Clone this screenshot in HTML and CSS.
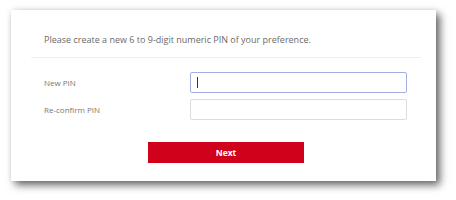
FILE: index.html
```html
<!DOCTYPE html>
<html>
<head>
<meta charset="utf-8">
<link rel="stylesheet" href="styles.css">
</head>
<body>
<div class="card">
  <p class="intro">Please create a new 6 to 9-digit numeric PIN of your preference.</p>
  <div class="divider"></div>
  <div class="form">
    <div class="row">
      <label class="label">New PIN</label>
      <div class="input focused"><span class="caret"></span></div>
    </div>
    <div class="row">
      <label class="label">Re-confirm PIN</label>
      <div class="input"></div>
    </div>
  </div>
  <button class="next">Next</button>
</div>
</body>
</html>
```
FILE: styles.css
```css
html, body {
  margin: 0;
  padding: 0;
  background: #fff;
}
body {
  width: 456px;
  height: 200px;
  overflow: hidden;
  font-family: "Open Sans", "Noto Sans", sans-serif;
}
.card {
  margin: 10px 0 0 11px;
  width: 425px;
  height: 171px;
  box-sizing: border-box;
  background: #fff;
  box-shadow: 4px 4px 8px rgba(0,0,0,0.6), 0 0 5px rgba(0,0,0,0.08);
  padding-top: 23px;
  display: flex;
  flex-direction: column;
}
.intro {
  margin: 0 0 10px 33px;
  font-size: 9px;
  line-height: 14px;
  color: #6a6a6a;
}
.divider {
  height: 1px;
  background: #efefef;
  margin: 0 15px 0 20px;
}
.form {
  margin-top: 14px;
  display: flex;
  flex-direction: column;
  gap: 6px;
}
.row {
  display: flex;
  align-items: center;
  padding-left: 33px;
}
.label {
  width: 146px;
  font-size: 8px;
  color: #777;
  line-height: 12px;
}
.input {
  width: 217px;
  height: 21px;
  box-sizing: border-box;
  border: 1px solid #dcdcdc;
  border-radius: 2px;
  background: #fff;
  display: flex;
  align-items: center;
  padding-left: 6px;
}
.input.focused {
  border-color: #a3aee3;
}
.caret {
  width: 1px;
  height: 11px;
  background: #333;
}
.next {
  margin: 22px 0 0 137px;
  width: 156px;
  height: 21px;
  border: none;
  background: #d0021b;
  color: #fff;
  font-family: "Open Sans", "Noto Sans", sans-serif;
  font-weight: 700;
  font-size: 8.5px;
  padding: 0;
}
```
